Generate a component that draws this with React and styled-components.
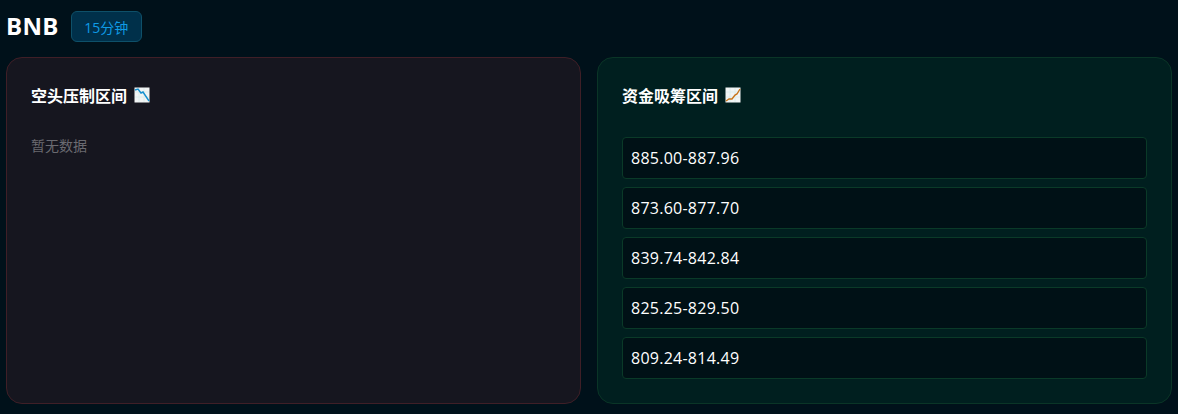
import React from "react";
import styled, { createGlobalStyle } from "styled-components";

const GlobalStyle = createGlobalStyle`
  html, body {
    margin: 0;
    padding: 0;
    background: #00111a;
    font-family: "Open Sans", "Noto Sans CJK SC", sans-serif;
  }
`;

const Page = styled.div`
  width: 1178px;
  height: 414px;
  box-sizing: border-box;
  padding: 11px 6px 10px;
  display: flex;
  flex-direction: column;
  gap: 15px;
  overflow: hidden;
`;

const Header = styled.div`
  display: flex;
  align-items: center;
  gap: 12px;
  height: 31px;
`;

const Symbol = styled.h2`
  margin: -2px 0 0;
  font-size: 24px;
  line-height: 31px;
  font-weight: 700;
  letter-spacing: 0.35px;
  color: #fff;
`;

const Badge = styled.span`
  width: 71px;
  height: 31px;
  box-sizing: border-box;
  display: flex;
  align-items: center;
  justify-content: center;
  font-size: 14px;
  color: #0f9be6;
  background: #00304a;
  border: 1px solid #0e5069;
  border-radius: 6px;
`;

const Panels = styled.div`
  flex: 1;
  display: grid;
  grid-template-columns: 1fr 1fr;
  grid-template-rows: minmax(0, 1fr);
  gap: 16px;
  min-height: 0;
`;

const Panel = styled.section`
  box-sizing: border-box;
  padding: 24px;
  border-radius: 16px;
  border: 1px solid ${(p) => (p.$tone === "short" ? "#3f1f27" : "#0a3527")};
  background: ${(p) => (p.$tone === "short" ? "#16161f" : "#001f1f")};
`;

const Title = styled.h3`
  margin: 0;
  height: 25px;
  display: flex;
  align-items: center;
  gap: 7px;
  font-size: 16px;
  font-weight: 700;
  color: #fff;
`;

const Empty = styled.div`
  margin-top: 29px;
  font-size: 14px;
  line-height: 20px;
  color: #6a6a70;
`;

const List = styled.div`
  display: flex;
  flex-direction: column;
  gap: 8px;
  margin-top: 30px;
`;

const Row = styled.div`
  height: 42px;
  box-sizing: border-box;
  display: flex;
  align-items: center;
  padding: 0 8px;
  font-size: 16px;
  letter-spacing: 0.25px;
  color: #fff;
  background: #001116;
  border: 1px solid #0a3a28;
  border-radius: 4px;
`;

const Chart = ({ points, stroke }) => (
  <svg width="16" height="16" viewBox="0 0 16 16">
    <rect x="0.5" y="0.5" width="15" height="15" fill="#f1f4f4" />
    <path d="M5 1v14M10 1v14M1 5h14M1 10h14" stroke="#dcecec" strokeWidth="1" fill="none" />
    <polyline points={points} stroke={stroke} strokeWidth="1.4" fill="none" />
  </svg>
);

const ranges = ["885.00-887.96", "873.60-877.70", "839.74-842.84", "825.25-829.50", "809.24-814.49"];

export default function App() {
  return (
    <Page>
      <GlobalStyle />
      <Header>
        <Symbol>BNB</Symbol>
        <Badge>15分钟</Badge>
      </Header>
      <Panels>
        <Panel $tone="short">
          <Title>
            空头压制区间
            <Chart points="1,3 4,2 7,6 9,5 15,14" stroke="#1590d0" />
          </Title>
          <Empty>暂无数据</Empty>
        </Panel>
        <Panel $tone="long">
          <Title>
            资金吸筹区间
            <Chart points="1,14 4,12 7,12 10,8 12,7 15,2" stroke="#c8741a" />
          </Title>
          <List>
            {ranges.map((r) => (
              <Row key={r}>{r}</Row>
            ))}
          </List>
        </Panel>
      </Panels>
    </Page>
  );
}
